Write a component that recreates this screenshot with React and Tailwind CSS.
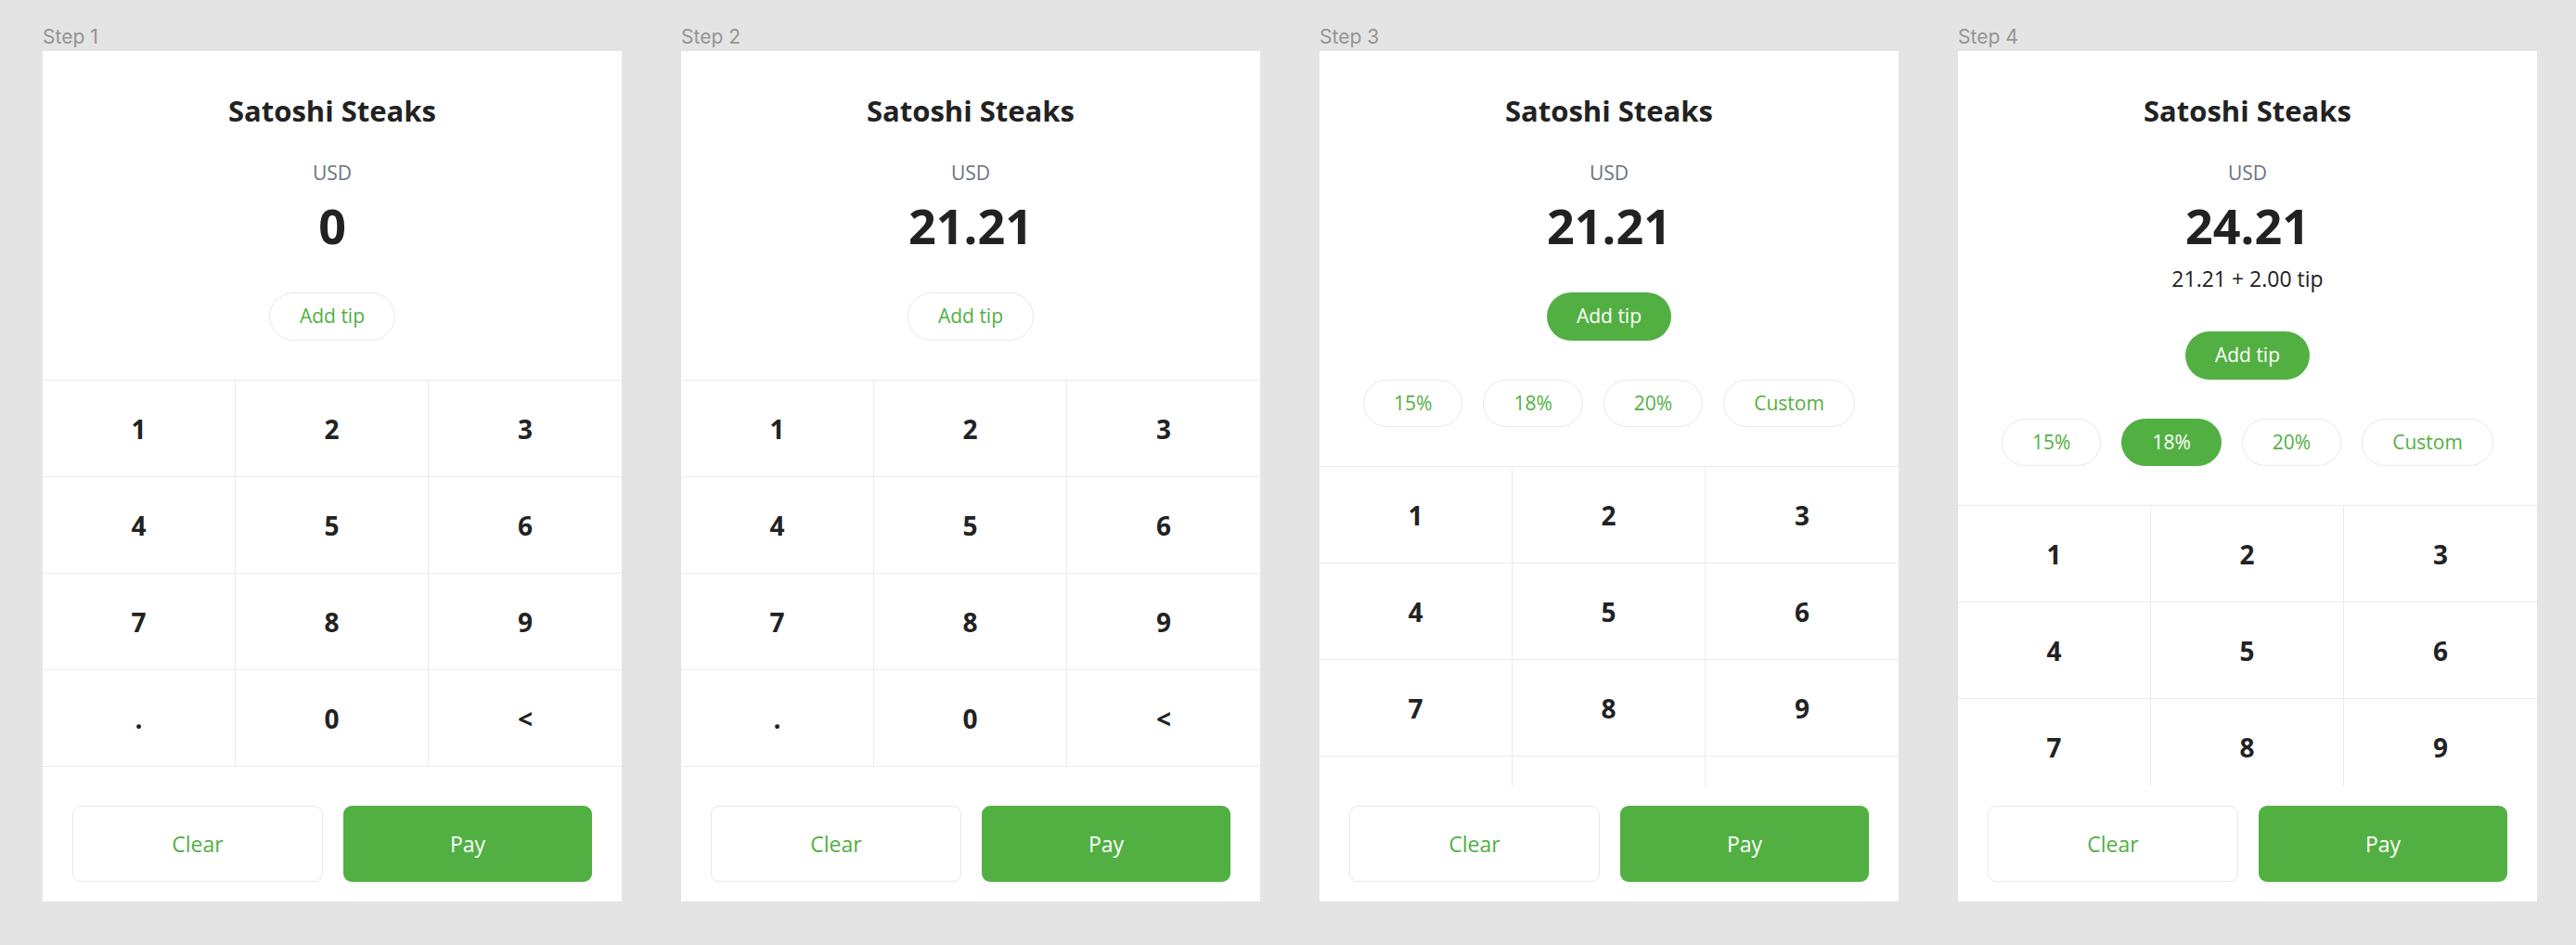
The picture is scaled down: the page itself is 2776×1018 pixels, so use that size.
import React from "react";

function Keypad({ compact }) {
  const keys = ["1", "2", "3", "4", "5", "6", "7", "8", "9", ".", "0", "<"];
  return (
    <div className="grid grid-cols-3 border-t border-[#e9ebee]">
      {keys.map((k, i) => (
        <div
          key={k}
          className={
            (i % 3 === 2 ? "" : "border-r ") +
            "flex h-[104px] items-center justify-center border-b border-[#e9ebee] text-[28px] font-bold text-[#222222]"
          }
        >
          {compact && i >= 9 ? "" : k}
        </div>
      ))}
    </div>
  );
}

function Chip({ label, active }) {
  return active ? (
    <div className="flex h-[51px] items-center rounded-full border border-[#52b043] bg-[#52b043] px-8 text-[21px] text-white">
      {label}
    </div>
  ) : (
    <div className="flex h-[51px] items-center rounded-full border border-[#e6e8eb] bg-white px-8 text-[21px] text-[#52b043]">
      {label}
    </div>
  );
}

function Card({ step, amount, sub, tipActive, chips, activeChip }) {
  return (
    <div className="flex w-[624px] flex-col">
      <div className="mb-[3px] h-[24px] font-['Inter',sans-serif] text-[21px] leading-[24px] text-[#949494]">
        Step {step}
      </div>
      <div className="flex h-[916px] flex-col bg-white font-['Open_Sans',sans-serif]">
        <div className="flex flex-col items-center pt-[44px] pb-[42px]">
          <div className="text-[31px] font-bold leading-[40px] text-[#222222]">
            Satoshi Steaks
          </div>
          <div className="mt-[33px] text-[21px] leading-[28px] text-[#6b7280]">USD</div>
          <div className="mt-[13px] text-[52px] font-bold leading-[60px] text-[#222222]">
            {amount}
          </div>
          {sub && (
            <div className="mt-[12px] text-[23px] leading-[30px] text-[#222222]">{sub}</div>
          )}
          {tipActive ? (
            <div className="mt-[42px] flex h-[52px] items-center rounded-full bg-[#52b043] px-8 text-[21px] text-white">
              Add tip
            </div>
          ) : (
            <div className="mt-[42px] flex h-[52px] items-center rounded-full border border-[#e6e8eb] bg-white px-8 text-[21px] text-[#52b043]">
              Add tip
            </div>
          )}
          {chips && (
            <div className="mt-[42px] flex gap-[22px]">
              {["15%", "18%", "20%", "Custom"].map((c) => (
                <Chip key={c} label={c} active={c === activeChip} />
              ))}
            </div>
          )}
        </div>
        <div className="min-h-0 flex-1 overflow-hidden">
          <Keypad compact={chips} />
        </div>
        <div className="flex gap-[22px] px-8 pt-[21px] pb-[21px]">
          <div className="flex h-[82px] flex-1 items-center justify-center rounded-[9px] border border-[#e6e8eb] bg-white text-[23px] text-[#52b043]">
            Clear
          </div>
          <div className="flex h-[82px] flex-1 items-center justify-center rounded-[9px] bg-[#52b043] text-[23px] text-white">
            Pay
          </div>
        </div>
      </div>
    </div>
  );
}

export default function App() {
  return (
    <div className="flex h-[1018px] w-full gap-[64px] overflow-hidden bg-[#e4e4e4] pl-[46px] pt-[28px]">
      <Card step={1} amount="0" />
      <Card step={2} amount="21.21" />
      <Card step={3} amount="21.21" tipActive chips />
      <Card step={4} amount="24.21" sub="21.21 + 2.00 tip" tipActive chips activeChip="18%" />
    </div>
  );
}
